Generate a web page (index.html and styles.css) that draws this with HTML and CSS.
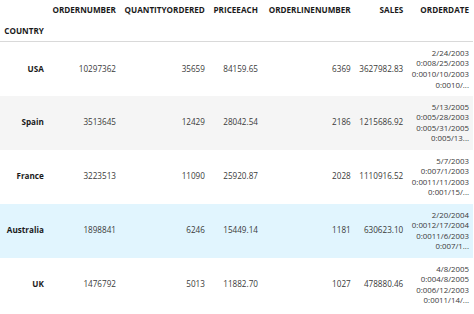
FILE: index.html
```html
<!DOCTYPE html>
<html>
<head>
<meta charset="utf-8">
<link rel="stylesheet" href="styles.css">
</head>
<body>
<table class="df">
  <thead>
    <tr>
      <th class="blank"></th>
      <th>ORDERNUMBER</th>
      <th>QUANTITYORDERED</th>
      <th>PRICEEACH</th>
      <th class="wide">ORDERLINENUMBER</th>
      <th>SALES</th>
      <th>ORDERDATE</th>
    </tr>
    <tr class="idx-row">
      <th>COUNTRY</th>
      <th></th><th></th><th></th><th></th><th></th><th></th>
    </tr>
  </thead>
  <tbody>
    <tr>
      <th>USA</th>
      <td>10297362</td><td>35659</td><td>84159.65</td><td>6369</td><td>3627982.83</td>
      <td class="date">2/24/2003<br>0:008/25/2003<br>0:0010/10/2003<br>0:0010/...</td>
    </tr>
    <tr class="alt">
      <th>Spain</th>
      <td>3513645</td><td>12429</td><td>28042.54</td><td>2186</td><td>1215686.92</td>
      <td class="date">5/13/2005<br>0:005/28/2003<br>0:005/31/2005<br>0:005/13...</td>
    </tr>
    <tr>
      <th>France</th>
      <td>3223513</td><td>11090</td><td>25920.87</td><td>2028</td><td>1110916.52</td>
      <td class="date">5/7/2003<br>0:007/1/2003<br>0:0011/11/2003<br>0:001/15/...</td>
    </tr>
    <tr class="hover">
      <th>Australia</th>
      <td>1898841</td><td>6246</td><td>15449.14</td><td>1181</td><td>630623.10</td>
      <td class="date">2/20/2004<br>0:0012/17/2004<br>0:0011/6/2003<br>0:007/1...</td>
    </tr>
    <tr>
      <th>UK</th>
      <td>1476792</td><td>5013</td><td>11882.70</td><td>1027</td><td>478880.46</td>
      <td class="date">4/8/2005<br>0:004/8/2005<br>0:006/12/2003<br>0:0011/14/...</td>
    </tr>
  </tbody>
</table>
</body>
</html>
```
FILE: styles.css
```css
html, body {
  margin: 0;
  padding: 0;
  background: #ffffff;
  overflow: hidden;
}
.df {
  border-collapse: collapse;
  border-spacing: 0;
  font-family: "Open Sans", "Noto Sans", sans-serif;
  font-size: 8.15px;
  line-height: 10.6px;
  color: #3a3a3a;
}
.df th,
.df td {
  padding: 5px 4.3px;
  text-align: right;
  vertical-align: middle;
  white-space: nowrap;
}
.df th {
  font-weight: 700;
  color: #1a1a1a;
}
.df th.wide {
  padding-left: 6.5px;
}
.df thead {
  border-bottom: 1px solid #d9d9d9;
}
.df tbody tr {
  height: 54px;
}
.df tbody tr.alt {
  background: #f5f5f5;
}
.df tbody tr.hover {
  background: #e1f5fe;
}
.df td.date {
  font-size: 7.85px;
  padding-top: 4px;
  padding-bottom: 4px;
}
```
